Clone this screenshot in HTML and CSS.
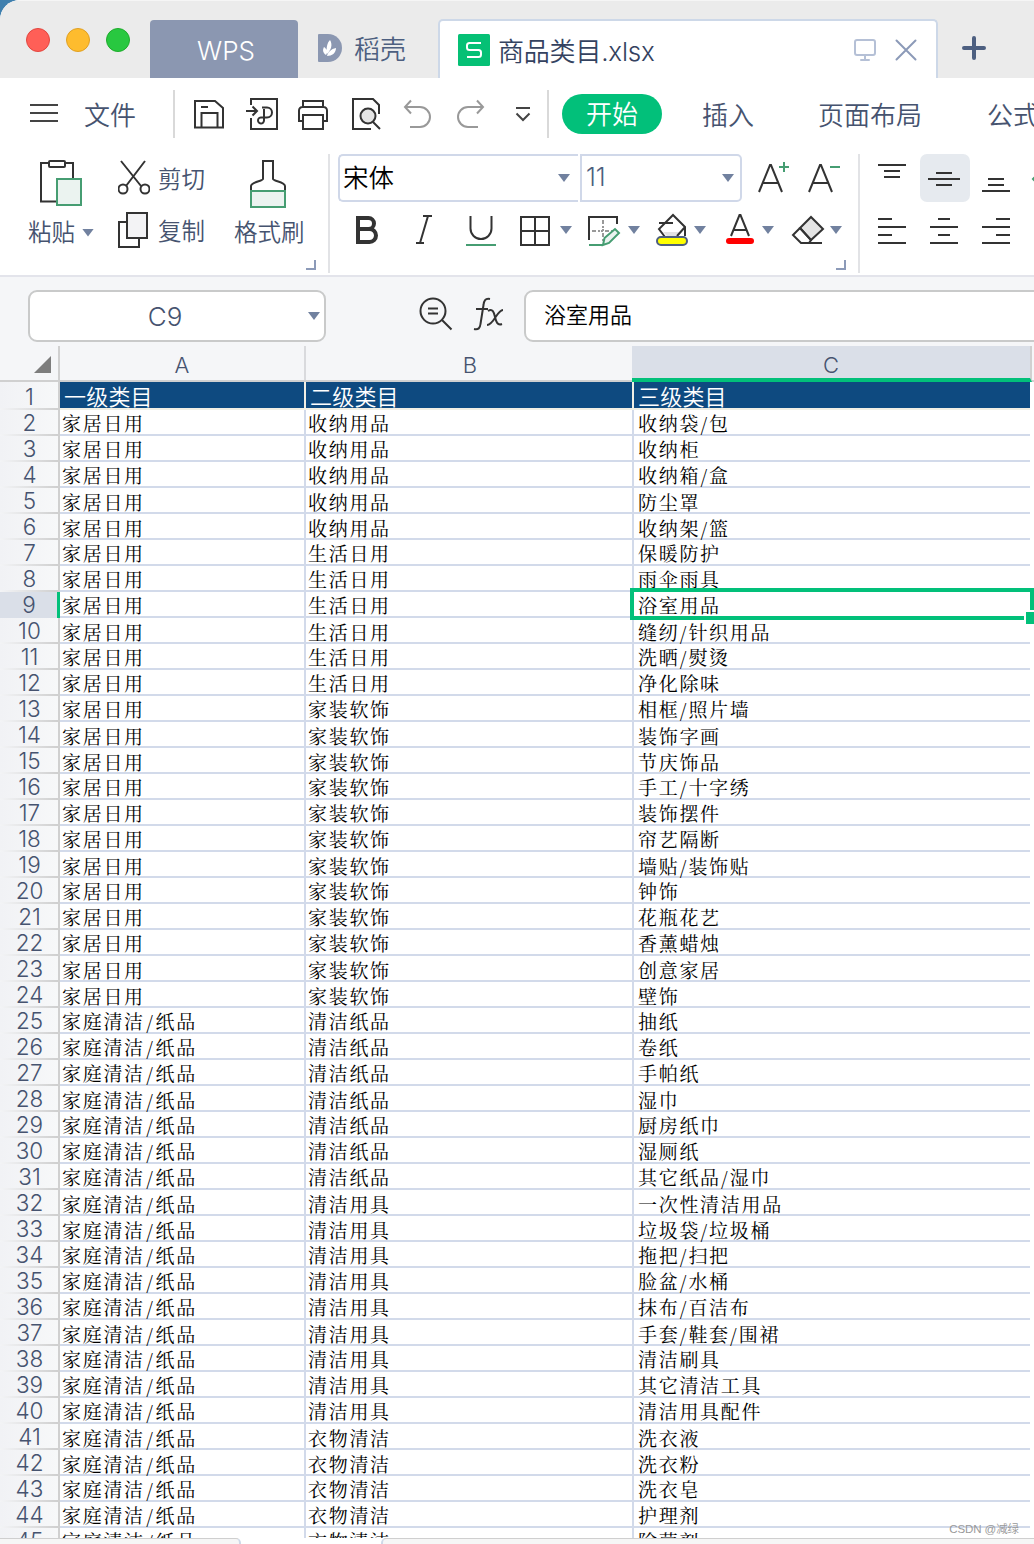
FILE: index.html
```html
<!DOCTYPE html>
<html lang="zh-CN">
<head>
  <meta charset="UTF-8">
  <title>商品类目.xlsx</title>
  <link rel="stylesheet" href="styles.css">
</head>
<body>
<div class="window">

  <header class="titlebar">
    <div class="lights">
      <span class="light red"></span>
      <span class="light yellow"></span>
      <span class="light green"></span>
    </div>
    <div class="tab tab-wps">WPS</div>
    <div class="tab tab-docer">
      <svg width="24" height="28" viewBox="0 0 24 28">
        <path d="M1 0H10a14 14 0 0 1 0 28H1a1 1 0 0 1-1-1V1a1 1 0 0 1 1-1z" fill="#8b97b1"/>
        <path d="M8 21C4 18 5 15 6 13c3 2 4 5 2 8zM9 20C8 14 9 9 12 6c3 5 1 10-3 14zM9 22c1-4 4-7 9-8 0 5-4 8-9 8z" fill="#fff"/>
      </svg>
      <span>稻壳</span>
    </div>
    <div class="tab tab-file">
      <svg width="32" height="32" viewBox="0 0 32 32">
        <rect width="32" height="32" rx="1.500" fill="#05c075"/>
        <path d="M23 9H11.500a2.500 2.500 0 0 0-2.500 2.500v2a2.500 2.500 0 0 0 2.500 2.500h9a2.500 2.500 0 0 1 2.500 2.500v2a2.500 2.500 0 0 1-2.500 2.500H9" fill="none" stroke="#fff" stroke-width="2"/>
      </svg>
      <span class="file-name">商品类目.xlsx</span>
      <svg class="screen" width="24" height="24" viewBox="0 0 24 24" fill="none" stroke="#b5c0d6" stroke-width="2" stroke-linecap="round">
        <rect x="2" y="2" width="20" height="15" rx="2"/>
        <path d="M12 17v5M8 22h8"/>
      </svg>
      <svg width="22" height="22" viewBox="0 0 22 22" stroke="#8c9ab8" stroke-width="2" stroke-linecap="round">
        <path d="M1.500 1.500l19 19M20.500 1.500l-19 19"/>
      </svg>
    </div>
    <svg class="new-tab" width="24" height="24" viewBox="0 0 24 24" stroke="#4d5f80" stroke-width="4" stroke-linecap="round">
      <path d="M12 2v20M2 12h20"/>
    </svg>
  </header>

  <nav class="menubar">
    <svg class="burger" width="28" height="20" viewBox="0 0 28 20" stroke="#444" stroke-width="2">
      <path d="M0 1h28M0 9h28M0 17h28"/>
    </svg>
    <span class="menu-item menu-file">文件</span>
    <div class="quick">
      <svg class="icon" viewBox="0 0 36 36">
        <path d="M4 5h20l8 7v19.500H4zM10.500 31.500V17h16v14.500M10 11h7"/>
      </svg>
      <svg class="icon" viewBox="0 0 36 36">
        <path d="M8 9V3h26v30H8V22M3 15h11M9.500 10.500L14 15l-4.500 4.500"/>
        <path d="M19 11.500h5a5 5 0 0 1 0 10h-5.500a3 3 0 1 0 2.500 3V13"/>
      </svg>
      <svg class="icon" viewBox="0 0 36 36">
        <path d="M8 11V5h20v6M8 25H4V14.500A3.500 3.500 0 0 1 7.500 11h21a3.500 3.500 0 0 1 3.500 3.500V25h-4M8 19h20v14H8z"/>
      </svg>
      <svg class="icon" viewBox="0 0 36 36">
        <path d="M32 18v-9l-6-6H6v30h18M26 26l7 7"/>
        <circle cx="21" cy="20" r="7.500" fill="#e4e4e4"/>
      </svg>
      <svg class="icon pale" viewBox="0 0 36 36">
        <path d="M12 4.500L6 11l6 6.500M6 11h15a9.500 9.500 0 0 1 0 20h-10"/>
      </svg>
      <svg class="icon pale" viewBox="0 0 36 36">
        <path d="M26 4.500l6 6.500-6 6.500M32 11H17a9.500 9.500 0 0 0 0 20h10"/>
      </svg>
      <svg class="more" width="16" height="16" viewBox="0 0 16 16" fill="none" stroke="#444" stroke-width="2">
        <path d="M1 2h14M1.500 7.500L8 14l6.500-6.500"/>
      </svg>
    </div>
    <span class="menu-item active">开始</span>
    <span class="menu-item insert">插入</span>
    <span class="menu-item layout">页面布局</span>
    <span class="menu-item formula">公式</span>
  </nav>

  <section class="ribbon">
    <div class="group clipboard">
      <div class="tool paste">
        <svg width="42" height="46" viewBox="0 0 42 46" fill="none" stroke="#333" stroke-width="2">
          <path d="M9 3H1v38.500h16M25 3h8v16"/>
          <rect x="9" y="1" width="16" height="6" rx="1"/>
          <rect x="17" y="19" width="24" height="26" fill="#ebf3f0" stroke="#469d72"/>
        </svg>
        <div class="label">粘贴<i class="caret"></i></div>
      </div>
      <div class="tool-pair">
        <div class="tool-row">
          <svg width="32" height="36" viewBox="0 0 32 36" fill="none" stroke="#333" stroke-width="2">
            <path d="M3 1l20 25M27 1L8 26"/>
            <circle cx="5" cy="29" r="4.500"/>
            <circle cx="27" cy="29" r="4.500"/>
          </svg>
          <span>剪切</span>
        </div>
        <div class="tool-row">
          <svg width="32" height="36" viewBox="0 0 32 36" fill="none" stroke="#333" stroke-width="2">
            <path d="M9 10H1v25h20v-9"/>
            <rect x="9" y="1" width="20" height="25" fill="#f3f3f5"/>
          </svg>
          <span>复制</span>
        </div>
      </div>
      <div class="tool brush">
        <svg width="36" height="48" viewBox="0 0 36 48" fill="none" stroke="#333" stroke-width="2">
          <path d="M1 30v-4c0-4 12-5 12-7V1h10v18c0 2 12 3 12 7v4"/>
          <rect x="1" y="31" width="34" height="16" fill="#ebf3f0" stroke="#469d72"/>
        </svg>
        <div class="label">格式刷</div>
      </div>
      <i class="launcher"></i>
    </div>

    <div class="group font">
      <div class="font-row">
        <div class="select family">宋体<i class="caret"></i></div>
        <div class="select size">11<i class="caret"></i></div>
        <svg class="bigger" width="32" height="32" viewBox="0 0 32 32" fill="none" stroke="#333" stroke-width="2">
          <path d="M1 30L12 3h1l11 27M5 21h15"/>
          <path d="M21 5h10M26 0v10" stroke="#469d72"/>
        </svg>
        <svg class="smaller" width="34" height="32" viewBox="0 0 34 32" fill="none" stroke="#333" stroke-width="2">
          <path d="M1 30L12 3h1l11 27M5 21h15"/>
          <path d="M22 5h10" stroke="#469d72"/>
        </svg>
      </div>
      <div class="style-row">
        <svg class="icon" viewBox="0 0 36 36">
          <path d="M9 6h10.500a5.500 5.500 0 0 1 0 11H9zM9 17h11.500a6 6 0 0 1 0 13H9z" stroke-width="4"/>
        </svg>
        <svg class="icon italic" viewBox="0 0 36 36">
          <path d="M17 4h9M10 31h8M22 4l-8 27"/>
        </svg>
        <svg class="icon underline" viewBox="0 0 36 36">
          <path d="M7.500 4v12.500a10.500 10.500 0 0 0 21 0V4"/>
          <path d="M3 33h30" stroke="#469d72"/>
        </svg>
        <svg class="icon borders" viewBox="0 0 36 36">
          <path d="M4 5h28v28H4zM18 5v28M4 19h28"/>
        </svg>
        <i class="caret"></i>
        <svg class="icon" viewBox="0 0 36 36">
          <path d="M4 28V5h28v7"/>
          <path d="M18 8v21M7 19h21" stroke="#999" stroke-dasharray="4 2 2 1 2 2"/>
          <path d="M4 33h14" stroke="#469d72"/>
          <path d="M18 33l1.500-7 10.500-9 4 4-10 10z" fill="#ebf3f0" stroke="#469d72"/>
        </svg>
        <i class="caret"></i>
        <svg class="icon" viewBox="0 0 36 36">
          <path d="M10 20h19l-6 5h-8z" fill="#e2e2e2" stroke="none"/>
          <path d="M12 25l-6-8L20 3l12 12v9M6 11h14M32 15l-8 9"/>
          <rect x="4" y="25" width="30" height="8" rx="4" fill="#ff0" stroke="#4d5f80"/>
        </svg>
        <i class="caret near"></i>
        <svg class="icon" viewBox="0 0 36 36">
          <path d="M10 24L18.500 3h1L28 24M13 18h12"/>
          <path d="M8 29h22" stroke="#f00" stroke-width="6" stroke-linecap="round"/>
        </svg>
        <i class="caret near"></i>
        <svg class="icon" viewBox="0 0 36 36">
          <path d="M11 16L22 5l12 12-12 11z" fill="#e4e4e4"/>
          <path d="M11 16l-7 7 8 8h21M11 16l11 12-2 3"/>
        </svg>
        <i class="caret near"></i>
      </div>
      <i class="launcher"></i>
    </div>

    <div class="group align">
      <div class="align-row">
        <span class="align-btn"><svg viewBox="0 0 50 48"><path d="M10 11h28M16 17h16M16 23h16"/></svg></span>
        <span class="align-btn on"><svg viewBox="0 0 50 48"><path d="M16 19h16M8 25h32M16 31h16"/></svg></span>
        <span class="align-btn"><svg viewBox="0 0 50 48"><path d="M16 25h16M16 31h16M10 37h28"/></svg></span>
        <span class="align-btn"><svg viewBox="0 0 50 48"><path d="M14 20l-5 5 5 5" stroke="#469d72"/></svg></span>
      </div>
      <div class="align-row">
        <span class="align-btn"><svg viewBox="0 0 50 48"><path d="M10 13h14M10 21h28M10 29h14M10 37h28"/></svg></span>
        <span class="align-btn"><svg viewBox="0 0 50 48"><path d="M18 13h12M10 21h28M18 29h12M10 37h28"/></svg></span>
        <span class="align-btn"><svg viewBox="0 0 50 48"><path d="M24 13h14M10 21h28M24 29h14M10 37h28"/></svg></span>
      </div>
    </div>
  </section>

  <section class="formula-bar">
    <div class="name-box"><span>C9</span><i class="caret"></i></div>
    <svg class="lookup" width="34" height="34" viewBox="0 0 34 34" fill="none" stroke="#333" stroke-width="2">
      <circle cx="14" cy="14" r="12.500"/>
      <path d="M9 11.500h10M9 16.500h10M23 23l9.500 9.500"/>
    </svg>
    <svg class="fx" width="32" height="34" viewBox="0 0 32 34" fill="none" stroke="#333" stroke-width="2">
      <path d="M17 2c-5-1-6 2-6.500 6L7.500 27c-.5 4-2 6-6.500 5M3 12h12"/>
      <path d="M15 14c5-3 6 2 7 6s2 9 7 7M30 13c-6 0-9 15-16 15"/>
    </svg>
    <div class="formula-input">浴室用品</div>
  </section>

  <main class="sheet">
    <div class="col-heads">
      <div class="corner"><i></i></div>
      <div class="col-head a">A</div>
      <div class="col-head b">B</div>
      <div class="col-head c selected">C</div>
    </div>
    <div class="rows" id="rows"></div>
  </main>

  <footer class="bottom">
    <div class="bottom-left"></div>
    <div class="bottom-right"></div>
  </footer>
  <div class="watermark">CSDN @减绿</div>
</div>

<script>
  // 一级类目, 二级类目, [三级类目...]
  const data = [
    ['家居日用', '收纳用品', ['收纳袋/包', '收纳柜', '收纳箱/盒', '防尘罩', '收纳架/篮']],
    ['家居日用', '生活日用', ['保暖防护', '雨伞雨具', '浴室用品', '缝纫/针织用品', '洗晒/熨烫', '净化除味']],
    ['家居日用', '家装软饰', ['相框/照片墙', '装饰字画', '节庆饰品', '手工/十字绣', '装饰摆件', '帘艺隔断',
      '墙贴/装饰贴', '钟饰', '花瓶花艺', '香薰蜡烛', '创意家居', '壁饰']],
    ['家庭清洁/纸品', '清洁纸品', ['抽纸', '卷纸', '手帕纸', '湿巾', '厨房纸巾', '湿厕纸', '其它纸品/湿巾']],
    ['家庭清洁/纸品', '清洁用具', ['一次性清洁用品', '垃圾袋/垃圾桶', '拖把/扫把', '脸盆/水桶', '抹布/百洁布',
      '手套/鞋套/围裙', '清洁刷具', '其它清洁工具', '清洁用具配件']],
    ['家庭清洁/纸品', '衣物清洁', ['洗衣液', '洗衣粉', '洗衣皂', '护理剂', '除菌剂']]
  ];

  const rows = document.getElementById('rows');
  let num = 1;

  function cell(col, text) {
    return `<div class="cell ${col}"><span>${text.replace(/\//g, '<i>/</i>')}</span></div>`;
  }

  function addRow(a, b, c) {
    const row = document.createElement('div');
    row.className = 'row';
    if (num === 1) row.classList.add('head');
    if (num === 9) row.classList.add('current');
    row.innerHTML = `<div class="num">${num}</div>` + cell('a', a) + cell('b', b) + cell('c', c);
    rows.appendChild(row);
    num++;
  }

  addRow('一级类目', '二级类目', '三级类目');
  data.forEach(([a, b, list]) => list.forEach(c => addRow(a, b, c)));
</script>
</body>
</html>
```

FILE: styles.css
```css
*,
*::before,
*::after {
  box-sizing: border-box;
  margin: 0;
  padding: 0;
}

body {
  width: 1034px;
  height: 1544px;
  overflow: hidden;
  background: #3f7fae;
  font-family: Inter, "Noto Sans CJK SC", sans-serif;
  font-weight: 350;
  color: #46536f;
}

.window {
  position: relative;
  height: 1544px;
  display: flex;
  flex-direction: column;
  background: #fff;
  border-top-left-radius: 20px;
  overflow: hidden;
}

svg {
  display: block;
  flex-shrink: 0;
}

.icon {
  width: 36px;
  height: 36px;
  fill: none;
  stroke: #333;
  stroke-width: 2;
}

.icon.pale {
  stroke: #999;
}

.caret {
  flex-shrink: 0;
  width: 12px;
  height: 8px;
  background: #71819f;
  clip-path: polygon(0 0, 100% 0, 50% 100%);
}

/* title bar */
.titlebar {
  height: 78px;
  display: flex;
  align-items: flex-end;
  background: #ebebeb;
  border-top: 1px solid #f5f5f5;
  font-size: 26px;
}

.lights {
  display: flex;
  gap: 16px;
  width: 150px;
  padding: 0 0 26px 26px;
}

.light {
  width: 24px;
  height: 24px;
  border-radius: 50%;
}

.red { background: #ff5f57; border: 1px solid #e2463f; }
.yellow { background: #febc2e; border: 1px solid #e0a023; }
.green { background: #28c840; border: 1px solid #1eac2b; }

.tab {
  height: 58px;
  display: flex;
  align-items: center;
}

.tab-wps {
  width: 148px;
  justify-content: center;
  padding: 3px 0 0 4px;
  background: #8b97b1;
  border-radius: 4px 4px 0 0;
  color: #fff;
}

.tab-docer {
  width: 140px;
  padding-left: 20px;
  gap: 12px;
  color: #4d5f80;
}

.tab-docer svg {
  margin-bottom: 2px;
}

.tab-docer span {
  margin-bottom: 4px;
}

.tab-file {
  width: 500px;
  height: 59px;
  padding: 1px 19px 0 18px;
  background: #fff;
  border: 2px solid #cdd8e8;
  border-bottom: none;
  border-radius: 5px 5px 0 0;
  color: #34425f;
}

.file-name {
  margin: 0 0 1px 8px;
  letter-spacing: -0.2px;
}

.screen {
  margin: 0 18px 0 auto;
}

.new-tab {
  margin: 0 0 18px 24px;
}

/* menu row */
.menubar {
  height: 70px;
  display: flex;
  align-items: center;
  padding: 2px 0 0 30px;
  font-size: 26px;
  white-space: nowrap;
  overflow: hidden;
}

.menu-item {
  flex-shrink: 0;
  line-height: 38px;
  padding-top: 3px;
}

.menu-file {
  width: 89px;
  margin-left: 26px;
}

.quick {
  flex-shrink: 0;
  display: flex;
  align-items: center;
  gap: 16px;
  width: 376px;
  height: 48px;
  padding-left: 16px;
  border-left: 2px solid #d9d9d9;
  border-right: 2px solid #d9d9d9;
}

.more {
  margin-left: 12px;
}

.menu-item.active {
  width: 100px;
  height: 40px;
  margin-left: 13px;
  padding: 0;
  border-radius: 20px;
  background: #02c07a;
  color: #fff;
  line-height: 42px;
  text-align: center;
}

.insert { margin-left: 40px; }
.layout { margin-left: 64px; }
.formula { margin-left: 65px; }

/* ribbon */
.ribbon {
  height: 129px;
  display: flex;
  padding-top: 6px;
  border-bottom: 2px solid #e3e4eb;
  font-size: 23.5px;
  overflow: hidden;
}

.group {
  position: relative;
  flex-shrink: 0;
  height: 119px;
  border-right: 2px solid #e2e3e6;
}

.clipboard {
  width: 330px;
  display: flex;
  padding: 6px 0 0 28px;
}

.tool {
  display: flex;
  flex-direction: column;
}

.tool .label {
  display: flex;
  align-items: center;
  height: 34px;
  line-height: 34px;
  padding-top: 1px;
  white-space: nowrap;
}

.paste {
  width: 90px;
}

.paste svg {
  margin: 0 0 9px 12px;
}

.paste .caret {
  margin-left: 7px;
}

.tool-pair {
  width: 116px;
  display: flex;
  flex-direction: column;
  gap: 16px;
}

.tool-row {
  display: flex;
  align-items: center;
  gap: 8px;
  height: 36px;
}

.brush svg {
  margin: 0 0 7px 16px;
}

.launcher {
  position: absolute;
  right: 12px;
  bottom: 3px;
  width: 10px;
  height: 10px;
  border-right: 2px solid #8c9ab8;
  border-bottom: 2px solid #8c9ab8;
}

.font {
  width: 530px;
  padding-left: 8px;
}

.font-row {
  display: flex;
  align-items: center;
}

.select {
  display: flex;
  align-items: center;
  justify-content: space-between;
  height: 48px;
  padding: 0 8px 0 3px;
  border: 2px solid #d0d8e9;
  font-size: 25.5px;
  line-height: 38px;
}

.family {
  width: 240px;
  border-right: none;
  border-radius: 5px 0 0 5px;
  color: #000;
}

.size {
  width: 162px;
  margin-left: 2px;
  padding: 0 6px 2px 4px;
  border-radius: 0 5px 5px 0;
  color: #4d5f80;
  font-size: 25px;
}

.size .caret {
  margin-top: 2px;
}

.bigger { margin-left: 16px; }
.smaller { margin-left: 18px; }

.style-row {
  display: flex;
  align-items: center;
  margin: 10px 0 0 11px;
}

.italic, .underline { margin-left: 21px; }
.borders { margin-left: 18px; }
.style-row .caret { margin: 0 13px 0 7px; }
.style-row .caret.near { margin: 0 15px 0 5px; }

.align {
  padding-left: 8px;
  border-right: none;
}

.align-row {
  display: flex;
  gap: 2px;
  height: 52px;
}

.align-btn {
  width: 50px;
  height: 48px;
  border-radius: 7px;
}

.align-btn.on {
  background: #e6eaef;
}

.align-btn svg {
  width: 50px;
  height: 48px;
  fill: none;
  stroke: #333;
  stroke-width: 2;
}

/* formula bar */
.formula-bar {
  height: 69px;
  display: flex;
  align-items: flex-start;
  padding: 13px 0 0 28px;
  background: #f5f6f8;
}

.name-box {
  display: flex;
  align-items: center;
  width: 298px;
  height: 52px;
  padding-right: 4px;
  background: #fff;
  border: 2px solid #c9caca;
  border-radius: 9px;
  font-size: 26px;
}

.name-box span {
  flex: 1;
  padding: 0 8px 0 0;
  text-align: center;
}

.lookup { margin: 7px 0 0 93px; }
.fx { margin: 7px 0 0 20px; }

.formula-input {
  flex: 1;
  height: 52px;
  margin: 0 -10px 0 19px;
  padding-left: 18px;
  background: #fff;
  border: 2px solid #c9caca;
  border-radius: 9px;
  color: #000;
  font-size: 22px;
  line-height: 46px;
}

/* sheet */
.sheet {
  height: 1192px;
  overflow: hidden;
}

.col-heads {
  display: flex;
  height: 36px;
  background: #f5f6f8;
  border-bottom: 2px solid #d0d0d0;
}

.corner {
  width: 60px;
  border-right: 2px solid #d0d0d0;
}

.corner i {
  display: block;
  width: 17px;
  height: 17px;
  margin: 10px 0 0 34px;
  background: #7d7d7d;
  clip-path: polygon(100% 0, 100% 100%, 0 100%);
}

.col-head {
  border-right: 2px solid #d9dadd;
  font-size: 22px;
  line-height: 38px;
  text-align: center;
}

.a { width: 246px; }
.b { width: 328px; }
.c { width: 396px; }

.col-head.b {
  border-right: none;
}

.col-head.c {
  width: 400px;
  height: 36px;
  margin-left: -2px;
  background: #dadfe8;
  border-right: 2px solid #d0d0d0;
  border-bottom: 4px solid #02c07a;
}

.row {
  display: flex;
  height: 26px;
}

.num {
  width: 60px;
  padding: 0 0 2px 1px;
  border-right: 2px solid #d0d0d0;
  background:
    linear-gradient(to right, #f3f4f6, #cfcfcf) bottom / 100% 2px no-repeat,
    linear-gradient(to right, #f1f2f5, #f7f8f9);
  font-size: 22.5px;
  line-height: 25px;
  text-align: center;
}

.cell {
  height: 100%;
  padding-left: 2px;
  border-right: 2px solid #d2daea;
  border-bottom: 2px solid #d2daea;
  color: #000;
  font-family: "Noto Serif CJK SC", "Noto Sans CJK SC", serif;
  font-size: 19px;
  font-weight: 400;
  letter-spacing: 1.7px;
  line-height: 22px;
  white-space: nowrap;
}

.cell.c {
  padding-left: 4px;
  border-right: none;
}

.cell span {
  display: block;
  padding-top: 2px;
}

.cell i {
  margin: 0 0.3px;
  font-style: normal;
}

.cell.a i {
  margin: 0 1px 0 1.4px;
}

.row:nth-child(9n + 1) span,
.row:nth-child(9n + 5) span,
.row:nth-child(9n + 6) span {
  padding-top: 3px;
}

.row.head {
  height: 28px;
}

.head .cell {
  padding-left: 4px;
  background: #0e4a80;
  border-color: #f1efe4;
  color: #fff;
  font-family: "Noto Sans CJK SC", sans-serif;
  font-size: 22px;
  font-weight: 350;
  letter-spacing: 0.2px;
}

.row.head span {
  padding-top: 2px;
}

.head .num {
  line-height: 29px;
}

.current .num {
  background: #dadfe8;
  border-right: 3px solid #02c07a;
}

.current .cell.c {
  position: relative;
}

/* selection frame and fill handle */
.current .cell.c::before {
  content: "";
  position: absolute;
  left: -4px;
  top: -4px;
  width: 404px;
  height: 32px;
  border: 4px solid #02c07a;
}

.current .cell.c::after {
  content: "";
  position: absolute;
  left: 390px;
  top: 18px;
  width: 14px;
  height: 14px;
  background: #02c07a;
  border-left: 2px solid #fff;
  border-top: 2px solid #fff;
}

/* bottom strip */
.bottom {
  display: flex;
  justify-content: space-between;
  height: 6px;
  background: #fff;
}

.bottom-left,
.bottom-right {
  background: #f6f6f6;
  border-top: 1px solid #cfcfcf;
}

.bottom-left {
  width: 241px;
  border-right: 2px solid #cdd8e8;
  border-radius: 0 5px 0 0;
}

.bottom-right {
  width: 653px;
  border-left: 2px solid #cdd8e8;
  border-radius: 5px 0 0 0;
}

.watermark {
  position: absolute;
  right: 15px;
  bottom: 8px;
  color: #999;
  font-family: "Liberation Sans", "Noto Sans CJK SC", sans-serif;
  font-size: 11.5px;
  letter-spacing: -0.1px;
}
```
